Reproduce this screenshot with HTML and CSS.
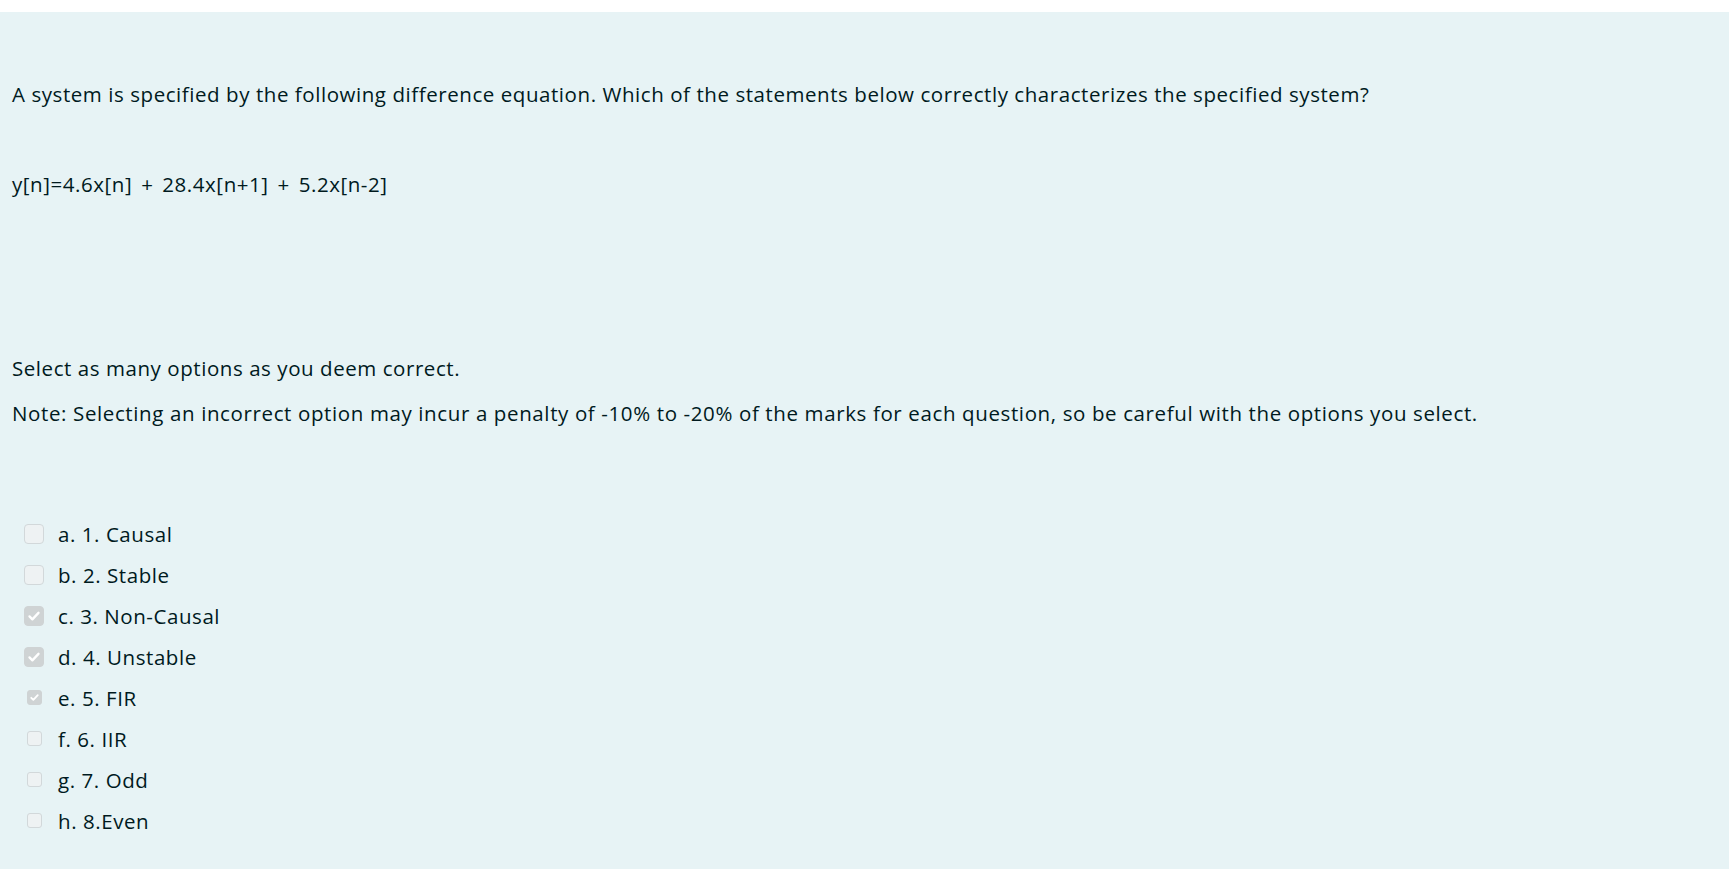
FILE: index.html
```html
<!DOCTYPE html>
<html lang="en">
<head>
<meta charset="utf-8">
<title>Question</title>
<link rel="stylesheet" href="styles.css">
</head>
<body>
<div class="page">
  <div class="formulation">
    <p class="qtext">A system is specified by the following difference equation. Which of the statements below correctly characterizes the specified system?</p>
    <p class="equation">y[n]=4.6x[n] + 28.4x[n+1] + 5.2x[n-2]</p>
    <p class="instr">Select as many options as you deem correct.</p>
    <p class="note">Note: Selecting an incorrect option may incur a penalty of -10% to -20% of the marks for each question, so be careful with the options you select.</p>
    <div class="answers">
      <div class="opt"><span class="box big"></span><span class="lbl">a. 1. Causal</span></div>
      <div class="opt"><span class="box big"></span><span class="lbl">b. 2. Stable</span></div>
      <div class="opt"><span class="box big checked"><svg viewBox="0 0 20 20"><path d="M5 10.5l3.2 3.2L15 6.5" fill="none" stroke="#fff" stroke-width="2.6" stroke-linecap="round" stroke-linejoin="round"/></svg></span><span class="lbl">c. 3. Non-Causal</span></div>
      <div class="opt"><span class="box big checked"><svg viewBox="0 0 20 20"><path d="M5 10.5l3.2 3.2L15 6.5" fill="none" stroke="#fff" stroke-width="2.6" stroke-linecap="round" stroke-linejoin="round"/></svg></span><span class="lbl">d. 4. Unstable</span></div>
      <div class="opt"><span class="box small checked"><svg viewBox="0 0 20 20"><path d="M5 10.5l3.2 3.2L15 6.5" fill="none" stroke="#fff" stroke-width="2.8" stroke-linecap="round" stroke-linejoin="round"/></svg></span><span class="lbl">e. 5. FIR</span></div>
      <div class="opt"><span class="box small"></span><span class="lbl">f. 6. IIR</span></div>
      <div class="opt"><span class="box small"></span><span class="lbl">g. 7. Odd</span></div>
      <div class="opt"><span class="box small"></span><span class="lbl">h. 8.Even</span></div>
    </div>
  </div>
</div>
</body>
</html>
```
FILE: styles.css
```css
html, body {
  margin: 0;
  padding: 0;
  background: #ffffff;
}
body {
  font-family: "Open Sans", "Noto Sans", sans-serif;
  color: #001a1e;
}
.page {
  padding-top: 12px;
  padding-bottom: 6px;
}
.formulation {
  background: #e7f3f5;
  padding: 68px 12px 28px 12px;
  font-size: 20.5px;
  letter-spacing: 0.56px;
}
.formulation p {
  margin: 0;
  line-height: 28px;
}
.equation {
  margin-top: 62px !important;
  word-spacing: 3px;
}
.instr {
  margin-top: 156px !important;
}
.note {
  margin-top: 17px !important;
  letter-spacing: 0.62px;
}
.answers {
  margin-top: 86px;
  display: flex;
  flex-direction: column;
}
.opt {
  height: 41px;
  display: flex;
  align-items: center;
}
.box {
  flex: none;
  box-sizing: border-box;
  border: 1px solid #d2d8da;
  background: #eef2f3;
  border-radius: 4px;
  display: flex;
  align-items: center;
  justify-content: center;
}
.box svg {
  width: 100%;
  height: 100%;
}
.box.big {
  width: 20px;
  height: 20px;
  margin-left: 12px;
  margin-right: 14px;
}
.box.small {
  width: 15px;
  height: 15px;
  border-radius: 3px;
  margin-left: 15px;
  margin-right: 16px;
}
.box.checked {
  background: #cfd3d4;
  border-color: #cfd3d4;
}
.lbl {
  line-height: 28px;
}
```
